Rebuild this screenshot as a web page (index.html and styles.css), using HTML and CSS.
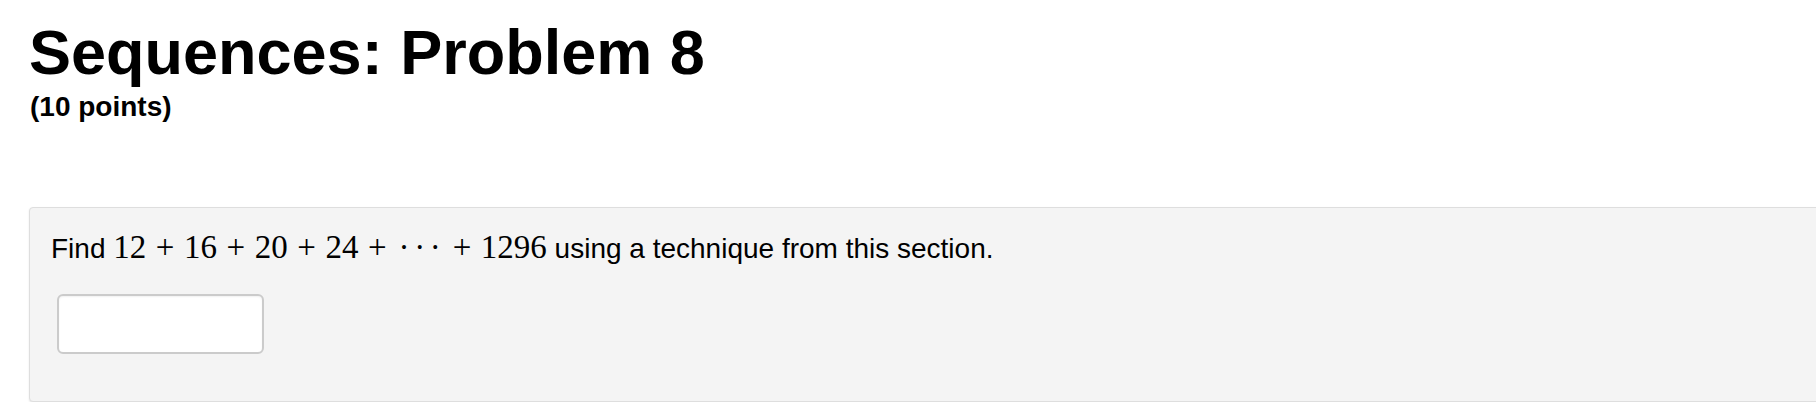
FILE: index.html
```html
<!DOCTYPE html>
<html lang="en">
<head>
    <meta charset="UTF-8">
    <meta name="viewport" content="width=device-width, initial-scale=1.0">
    <title>Sequences: Problem 8</title>
    <link rel="stylesheet" href="styles.css">
</head>
<body>
    <!-- Problem header -->
    <div class="problem-header">
        <h1>Sequences: Problem 8</h1>
        <p class="points">(10 points)</p>
    </div>

    <!-- Problem body -->
    <div class="problem-box">
        <p class="question">Find <span class="math"><span>12</span><span class="bin">+</span><span>16</span><span class="bin">+</span><span>20</span><span class="bin">+</span><span>24</span><span class="bin">+</span><span class="dots">&middot;&middot;&middot;</span><span class="bin">+</span><span>1296</span></span> using a technique from this section.</p>
        <input type="text" class="answer" aria-label="Answer">
    </div>
</body>
</html>
```

FILE: styles.css
```css
body {
    font-family: "Liberation Sans", Arial, sans-serif;
    background-color: #fff;
    color: #000;
    margin: 0;
    padding: 0 0 0 29px;
    overflow-x: hidden;
}

/* Header */
.problem-header {
    padding-top: 21px;
}
h1 {
    font-size: 63px;
    font-weight: bold;
    line-height: 1;
    margin: 0;
}
.points {
    font-size: 28px;
    font-weight: bold;
    line-height: 1.2;
    margin: 6px 0 0 1px;
}

/* Problem box */
.problem-box {
    background-color: #f4f4f4;
    border: 1px solid #dedede;
    border-radius: 4px;
    box-shadow: 0 1px 2px rgba(0, 0, 0, 0.1);
    margin-top: 83px;
    margin-right: -20px;
    padding: 21px 21px 47px;
}
.question {
    font-size: 28px;
    line-height: 1.4;
    margin: 0;
}
.math {
    font-family: "Liberation Serif", "Times New Roman", serif;
    font-size: 33px;
    line-height: 1;
}
.bin {
    margin: 0 0.29em;
}
.dots {
    letter-spacing: 0.14em;
    margin-left: 0.07em;
    margin-right: -0.07em;
}
.answer {
    display: block;
    width: 207px;
    height: 60px;
    box-sizing: border-box;
    margin: 26px 0 0 6px;
    border: 2px solid #cbcbcb;
    border-radius: 6px;
    background: #fff;
    box-shadow: inset 0 1px 2px rgba(0, 0, 0, 0.06);
    font-size: 20px;
}
```
